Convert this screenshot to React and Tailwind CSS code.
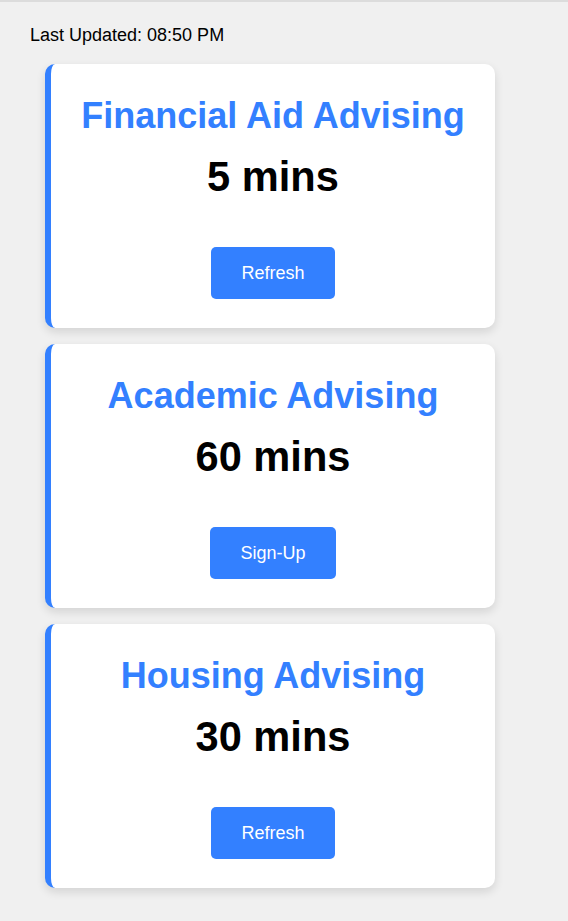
import React from "react";

const cards = [
  { title: "Financial Aid Advising", time: "5 mins", action: "Refresh" },
  { title: "Academic Advising", time: "60 mins", action: "Sign-Up" },
  { title: "Housing Advising", time: "30 mins", action: "Refresh" },
];

export default function App() {
  return (
    <div
      className="min-h-[921px] bg-[#f0f0f0] border-t-2 border-[#dcdcdc] px-[30px] pt-[23px] pb-[33px]"
      style={{ fontFamily: '"Liberation Sans", Arial, sans-serif' }}
    >
      <div className="text-[18px] leading-[21px] text-black">Last Updated: 08:50 PM</div>
      <div className="mt-[18px] ml-[15px] w-[450px] flex flex-col gap-4">
        {cards.map((c) => (
          <div
            key={c.title}
            className="bg-white rounded-[10px] border-l-[6px] border-[#3380ff] shadow-[0_4px_10px_rgba(0,0,0,0.12)] h-[264px] pt-[31px] flex flex-col items-center text-center"
          >
            <h2 className="text-[36px] leading-[41px] font-bold text-[#3380ff]">{c.title}</h2>
            <div className="mt-[17px] text-[41.6px] leading-[48px] font-bold text-black">{c.time}</div>
            <button className="mt-[46px] h-[52px] px-[30px] rounded-[5px] bg-[#3380ff] text-white text-[18px]">
              {c.action}
            </button>
          </div>
        ))}
      </div>
    </div>
  );
}
